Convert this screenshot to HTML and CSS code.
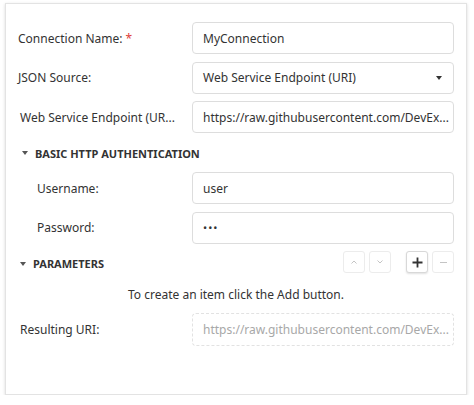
FILE: index.html
```html
<!DOCTYPE html>
<html lang="en">
<head>
  <meta charset="UTF-8" />
  <meta name="viewport" content="width=device-width, initial-scale=1.0"/>
  <title>Connection</title>
  <link rel="stylesheet" href="styles.css">
</head>
<body>
  <div class="panel">
    <div class="row">
      <label>Connection Name: <span class="req">*</span></label>
      <div class="field">MyConnection</div>
    </div>
    <div class="row">
      <label>JSON Source:</label>
      <div class="field select">
        <span>Web Service Endpoint (URI)</span>
        <span class="drop"></span>
      </div>
    </div>
    <div class="row">
      <label class="shift">Web Service Endpoint (UR...</label>
      <div class="field">https://raw.githubusercontent.com/DevEx...</div>
    </div>

    <div class="group-title auth">
      <span class="caret"></span>BASIC HTTP AUTHENTICATION
    </div>
    <div class="group-body">
      <div class="row">
        <label>Username:</label>
        <div class="field">user</div>
      </div>
      <div class="row">
        <label>Password:</label>
        <div class="field dots">&bull;&bull;&bull;</div>
      </div>
    </div>

    <div class="group-title params">
      <span class="caret"></span><span class="title-text">PARAMETERS</span>
      <div class="tools">
        <button class="tool off">
          <svg width="8" height="8" viewBox="0 0 8 8"><path d="M1.5 5.5 L4 3 L6.5 5.5" fill="none" stroke="currentColor" stroke-width="1"/></svg>
        </button>
        <button class="tool off">
          <svg width="8" height="8" viewBox="0 0 8 8"><path d="M1.5 2.5 L4 5 L6.5 2.5" fill="none" stroke="currentColor" stroke-width="1"/></svg>
        </button>
        <button class="tool add">
          <svg width="11" height="11" viewBox="0 0 11 11"><path d="M5.5 0.5 V10.5 M0.5 5.5 H10.5" stroke="currentColor" stroke-width="1.8"/></svg>
        </button>
        <button class="tool off">
          <svg width="9" height="9" viewBox="0 0 9 9"><path d="M1 4.5 H8" stroke="currentColor" stroke-width="1"/></svg>
        </button>
      </div>
    </div>
    <div class="empty">To create an item click the Add button.</div>

    <div class="row">
      <label class="shift">Resulting URI:</label>
      <div class="field readonly">https://raw.githubusercontent.com/DevEx...</div>
    </div>
  </div>
</body>
</html>
```

FILE: styles.css
```css
body {
  font-family: 'Noto Sans', 'Open Sans', sans-serif;
  font-size: 12px;
  color: #333;
  margin: 0;
  padding: 3px 7px 0 5px;
  background-color: #fff;
}

.panel {
  height: 392px;
  border: 1px solid #e3e3e3;
  box-shadow: 0 1px 3px rgba(0, 0, 0, 0.15);
  padding: 18px 12px 0 12px;
  box-sizing: border-box;
}

.row {
  display: flex;
  align-items: center;
  height: 32px;
  margin-bottom: 7.5px;
}

.row label {
  width: 174px;
  flex-shrink: 0;
  box-sizing: border-box;
}

.row label.shift {
  padding-left: 2px;
}

.req {
  color: #e0403a;
}

.field {
  flex: 1;
  height: 32px;
  box-sizing: border-box;
  border: 1px solid #dddddd;
  border-radius: 4px;
  padding: 0 10px;
  display: flex;
  align-items: center;
  white-space: nowrap;
  overflow: hidden;
}

.select {
  justify-content: space-between;
}

.drop {
  width: 0;
  height: 0;
  border-left: 3.5px solid transparent;
  border-right: 3.5px solid transparent;
  border-top: 4px solid #333;
  margin-right: 1px;
}

.dots {
  font-size: 11px;
  letter-spacing: 1px;
}

.readonly {
  border: 1px dashed #e2e2e2;
  color: #a8a8a8;
  height: 33px;
}

.group-title {
  display: flex;
  align-items: center;
  font-weight: bold;
  font-size: 11px;
  color: #333;
}

.caret {
  width: 0;
  height: 0;
  border-left: 3px solid transparent;
  border-right: 3px solid transparent;
  border-top: 4px solid #555;
  margin-right: 7px;
}

/* margins collapse with the row above, so these are the full gaps */
.auth {
  height: 20px;
  margin: 10px 0 9px 4px;
}

.group-body {
  padding-left: 19px;
}

.group-body .row label {
  width: 155px;
}

.params {
  height: 22px;
  margin: 0 0 0 2px;
}

.params .caret {
  margin-top: 3px;
}

.title-text {
  margin-top: 3px;
}

.tools {
  margin-left: auto;
  display: flex;
  gap: 4px;
}

.tool {
  width: 22px;
  height: 22px;
  padding: 0;
  border: 1px solid #ececec;
  border-radius: 3px;
  background: #fff;
  display: flex;
  align-items: center;
  justify-content: center;
  color: #c4c4c4;
}

.tool.add {
  margin-left: 11px;
  border-color: #d8d8d8;
  box-shadow: 0 1px 2px rgba(0, 0, 0, 0.12);
  color: #333;
}

.empty {
  text-align: center;
  padding: 13px 0 10px;
}
```
